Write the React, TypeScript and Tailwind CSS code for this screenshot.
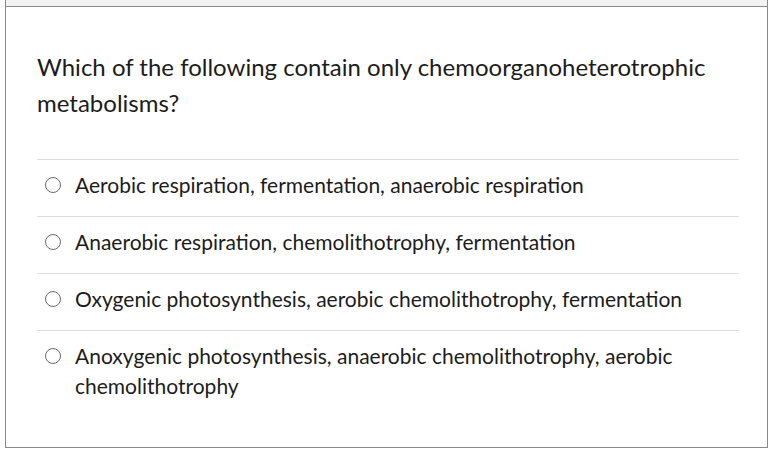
const options = [
  ["Aerobic respiration, fermentation, anaerobic respiration"],
  ["Anaerobic respiration, chemolithotrophy, fermentation"],
  ["Oxygenic photosynthesis, aerobic chemolithotrophy, fermentation"],
  ["Anoxygenic photosynthesis, anaerobic chemolithotrophy, aerobic", "chemolithotrophy"],
];

export default function App() {
  return (
    <div className="w-[769px] h-[458px] bg-white font-['Lato',sans-serif] text-[#1c1c1c]">
      <div className="ml-[5px] w-[763px] border-x border-[#8a8a8a] bg-[#f2f2f2] h-[6px]" />
      <div className="ml-[5px] w-[763px] h-[442px] border border-[#8a8a8a] bg-white pl-[31px] pr-[28px] pt-[42px]">
        <p className="text-[24px] leading-[36px]">
          Which of the following contain only chemoorganoheterotrophic
          <br />
          metabolisms?
        </p>
        <div className="mt-[38px]">
          {options.map((lines, i) => (
            <div key={i} className="flex items-start border-t border-[#dcdcdc] pt-[10px] pb-[16px]">
              <div className="w-[38px] h-[30px] flex items-center pl-[8px] shrink-0">
                <span className="w-[16px] h-[16px] rounded-full border border-[#6b6b6b] bg-white" />
              </div>
              <div className="text-[21px] leading-[30px]">
                {lines.map((l, j) => (
                  <div key={j}>{l}</div>
                ))}
              </div>
            </div>
          ))}
        </div>
      </div>
    </div>
  );
}
